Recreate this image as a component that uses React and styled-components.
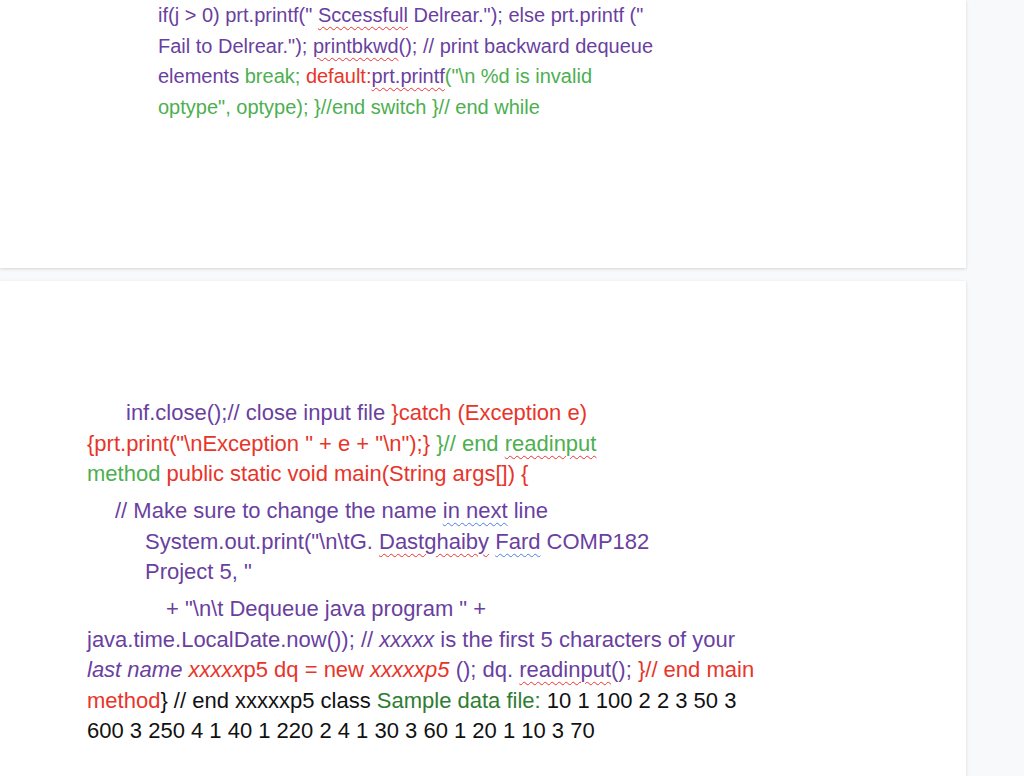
import React from "react";
import styled, { createGlobalStyle } from "styled-components";

const G = createGlobalStyle`
  html, body { margin: 0; padding: 0; background: #f8f9fa; overflow: hidden; }
  body { font-family: "Liberation Sans", Arial, sans-serif; }
`;
const Wrap = styled.div`display: flex; flex-direction: column; gap: 13px; width: 966px;`;
const Page = styled.div`
  background: #fff; box-shadow: 0 1px 3px rgba(0,0,0,0.15);
  height: ${p => p.h}px; padding-top: ${p => p.pt}px; box-sizing: border-box;
  font-size: ${p => p.fs}px;
`;
const Line = styled.div`
  line-height: 30.5px; white-space: pre; color: #6a3fa0;
  padding-left: ${p => p.indent}px; margin-top: ${p => p.gap || 0}px;
`;
const C = { p: "#6a3fa0", r: "#e8352a", g: "#4caf50", d: "#2e7d32", k: "#111" };
const S = styled.span`
  color: ${p => C[p.c || "p"]};
  font-style: ${p => (p.i ? "italic" : "normal")};
  text-decoration: ${p => (p.w ? `underline wavy ${p.w === "b" ? "#4a7fe0" : "#e33"}` : "none")};
  text-decoration-thickness: 1px; text-underline-offset: 4px;
`;

export default function App() {
  return (
    <>
      <G />
      <Wrap>
        <Page h={268} pt={0} fs={20}>
          <Line indent={158}>if(j &gt; 0) prt.printf(" <S w="r">Sccessfull</S> Delrear."); else prt.printf ("</Line>
          <Line indent={158}>Fail to Delrear."); <S w="r">printbkwd</S>(); // print backward dequeue</Line>
          <Line indent={158}>elements <S c="g">break; </S><S c="r">default:</S><S w="r">prt.printf</S><S c="g">("\n %d is invalid</S></Line>
          <Line indent={158}><S c="g">optype", optype); }//end switch }// end while</S></Line>
        </Page>
        <Page h={495} pt={117} fs={22}>
          <Line indent={126}>inf.close();// close input file <S c="r">}catch (Exception e)</S></Line>
          <Line indent={87}><S c="r">{"{prt.print(\"\\nException \" + e + \"\\n\");}"}</S><S c="g"> }// end <S c="g" w="r">readinput</S></S></Line>
          <Line indent={87}><S c="g">method </S><S c="r">public static void main(String args[]) {"{"}</S></Line>
          <Line indent={115} gap={6.5}>// Make sure to change the name <S w="b">in next</S> line</Line>
          <Line indent={145}>System.out.print("\n\tG. <S w="r">Dastghaiby</S> <S w="b">Fard</S> COMP182</Line>
          <Line indent={145}>Project 5, "</Line>
          <Line indent={166} gap={6.5}>+ "\n\t Dequeue java program " +</Line>
          <Line indent={87}>java.time.LocalDate.now()); // <S i>xxxxx</S> is the first 5 characters of your</Line>
          <Line indent={87}><S i>last name </S><S c="r"><S c="r" i>xxxxx</S>p5 dq = new <S c="r" i>xxxxxp5</S> </S>(); dq. <S w="r">readinput</S>(); <S c="r">}// end main</S></Line>
          <Line indent={87}><S c="r">method</S><S c="k">{"} // end xxxxxp5 class "}</S><S c="d">Sample data file: </S><S c="k">10 1 100 2 2 3 50 3</S></Line>
          <Line indent={87}><S c="k">600 3 250 4 1 40 1 220 2 4 1 30 3 60 1 20 1 10 3 70</S></Line>
        </Page>
      </Wrap>
    </>
  );
}
